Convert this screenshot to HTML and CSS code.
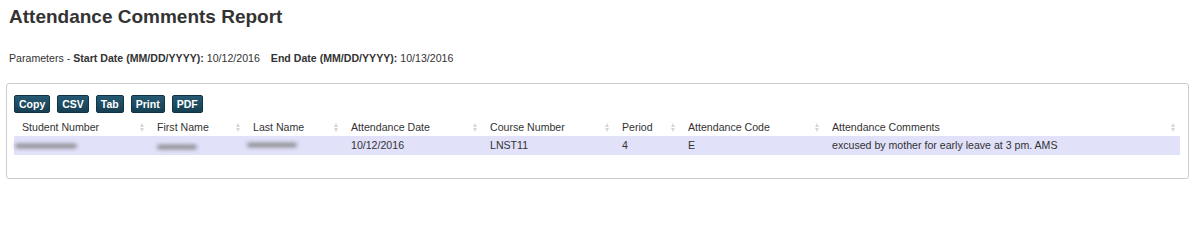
FILE: index.html
```html
<!DOCTYPE html>
<html>
<head>
<meta charset="utf-8">
<link rel="stylesheet" href="styles.css">
</head>
<body>
<div class="page">
  <h1 class="title">Attendance Comments Report</h1>
  <p class="params">Parameters - <b>Start Date (MM/DD/YYYY):</b> 10/12/2016<span class="sep"></span><b>End Date (MM/DD/YYYY):</b> 10/13/2016</p>
  <div class="box">
    <div class="buttons">
      <span class="btn">Copy</span>
      <span class="btn">CSV</span>
      <span class="btn">Tab</span>
      <span class="btn">Print</span>
      <span class="btn">PDF</span>
    </div>
    <table class="grid">
      <colgroup>
        <col style="width:135px"><col style="width:96px"><col style="width:98px"><col style="width:139px">
        <col style="width:132px"><col style="width:66px"><col style="width:144px"><col style="width:356px">
      </colgroup>
      <thead>
        <tr>
          <th>Student Number<i class="sort"></i></th>
          <th>First Name<i class="sort"></i></th>
          <th>Last Name<i class="sort"></i></th>
          <th>Attendance Date<i class="sort"></i></th>
          <th>Course Number<i class="sort"></i></th>
          <th>Period<i class="sort"></i></th>
          <th>Attendance Code<i class="sort"></i></th>
          <th>Attendance Comments<i class="sort"></i></th>
        </tr>
      </thead>
      <tbody>
        <tr>
          <td class="first"><span class="blur b1"></span></td>
          <td><span class="blur b2"></span></td>
          <td><span class="blur b3"></span></td>
          <td>10/12/2016</td>
          <td>LNST11</td>
          <td>4</td>
          <td>E</td>
          <td>excused by mother for early leave at 3 pm. AMS</td>
        </tr>
      </tbody>
    </table>
  </div>
</div>
</body>
</html>
```
FILE: styles.css
```css
html, body {
  margin: 0;
  padding: 0;
  background: #fff;
}
body {
  font-family: "Liberation Sans", Arial, sans-serif;
  color: #333;
}
.page {
  padding: 6px 0 0 0;
}
.title {
  margin: 0 0 0 9px;
  font-size: 19px;
  font-weight: bold;
  line-height: 22px;
  color: #333;
}
.params {
  margin: 23px 0 0 9px;
  font-size: 10.6px;
  line-height: 14px;
  color: #333;
}
.params b {
  font-weight: bold;
}
.sep {
  display: inline-block;
  width: 11px;
}
.box {
  box-sizing: border-box;
  margin: 18px 0 0 6px;
  width: 1183px;
  height: 96px;
  border: 1px solid #ccc;
  border-radius: 3px;
  padding: 11px 7px 0 7px;
}
.buttons {
  display: flex;
  gap: 7px;
  height: 18px;
}
.btn {
  box-sizing: border-box;
  height: 18px;
  padding: 0 4px;
  font-size: 10.5px;
  font-weight: bold;
  line-height: 17px;
  color: #fff;
  background: linear-gradient(#255a72, #173f52);
  border: 1px solid #0f3445;
  border-radius: 2px;
}
.grid {
  border-collapse: collapse;
  table-layout: fixed;
  width: 1166px;
  margin-top: 5px;
  font-size: 10.6px;
}
.grid th {
  position: relative;
  text-align: left;
  font-weight: normal;
  height: 18px;
  padding: 0 8px;
  line-height: 18px;
  color: #333;
}
.grid td {
  height: 19px;
  padding: 0 8px;
  line-height: 19px;
  background: #e1e1fa;
  color: #333;
}
.sort {
  position: absolute;
  right: 4px;
  top: 5px;
  width: 5px;
  height: 9px;
}
.sort::before, .sort::after {
  content: "";
  position: absolute;
  left: 0;
  border-left: 2.5px solid transparent;
  border-right: 2.5px solid transparent;
}
.sort::before {
  top: 0;
  border-bottom: 4px solid #d6d6d6;
}
.sort::after {
  bottom: 0;
  border-top: 4px solid #d6d6d6;
}
.blur {
  display: inline-block;
  height: 4px;
  background: #7d7d7d;
  filter: blur(2px);
  vertical-align: middle;
  border-radius: 2px;
}
.b1 {
  width: 62px;
  margin-left: -7px;
}
.b2 {
  width: 40px;
  margin-left: 0;
  position: relative;
  top: 1px;
}
.b3 {
  width: 50px;
  margin-left: -6px;
  position: relative;
  top: -1px;
}
```
